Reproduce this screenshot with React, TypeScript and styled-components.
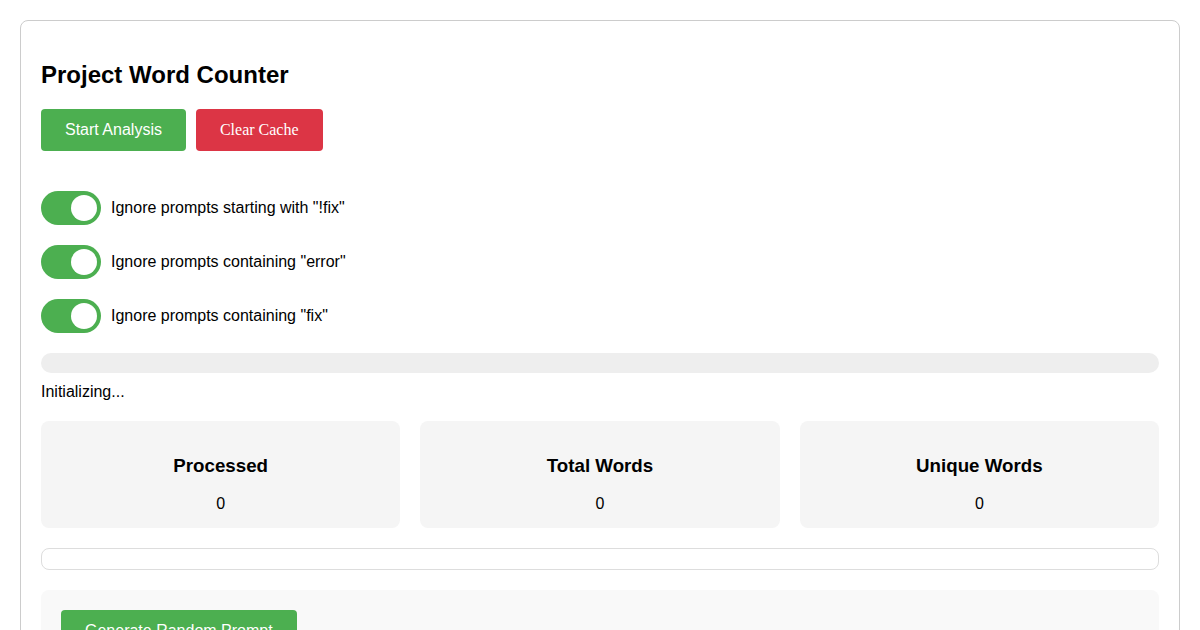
import React, { useState } from "react";
import styled, { createGlobalStyle } from "styled-components";

const GlobalStyle = createGlobalStyle`
  body {
    margin: 0;
    padding: 20px;
    font-family: "Liberation Sans", Arial, sans-serif;
    color: #000;
    background: #fff;
  }
`;

const Container = styled.div`
  border: 1px solid #ccc;
  border-radius: 8px;
  padding: 0 20px 20px;
  min-height: 700px;
`;

const Title = styled.h2`
  font-size: 24px;
  font-weight: bold;
  line-height: 28px;
  margin: 40px 0 20px;
`;

const ButtonRow = styled.div`
  display: flex;
  gap: 10px;
  margin-bottom: 40px;
`;

const Button = styled.button<{ $variant?: "primary" | "danger"; $serif?: boolean }>`
  background: ${(p) => (p.$variant === "danger" ? "#dc3545" : "#4caf50")};
  color: #fff;
  border: none;
  border-radius: 4px;
  padding: 12px 24px;
  font-size: 16px;
  line-height: 18px;
  font-family: ${(p) =>
    p.$serif ? '"Liberation Serif", "Times New Roman", serif' : '"Liberation Sans", Arial, sans-serif'};
  cursor: pointer;
`;

const ToggleList = styled.div`
  display: flex;
  flex-direction: column;
  gap: 20px;
  margin-bottom: 20px;
`;

const ToggleRow = styled.label`
  display: flex;
  align-items: center;
  gap: 10px;
  font-size: 16px;
  cursor: pointer;
`;

const Switch = styled.span<{ $on: boolean }>`
  position: relative;
  width: 60px;
  height: 34px;
  border-radius: 34px;
  background: ${(p) => (p.$on ? "#4caf50" : "#ccc")};
  flex-shrink: 0;

  &::before {
    content: "";
    position: absolute;
    width: 26px;
    height: 26px;
    left: 4px;
    top: 4px;
    border-radius: 50%;
    background: #fff;
    transform: translateX(${(p) => (p.$on ? "26px" : "0")});
    transition: transform 0.2s;
  }
`;

const HiddenInput = styled.input.attrs({ type: "checkbox" })`
  display: none;
`;

const ProgressTrack = styled.div`
  height: 20px;
  border-radius: 10px;
  background: #eee;
  overflow: hidden;
`;

const ProgressFill = styled.div`
  height: 100%;
  background: #4caf50;
`;

const Status = styled.div`
  margin: 10px 0 20px;
  font-size: 16px;
  line-height: 18px;
`;

const StatsGrid = styled.div`
  display: grid;
  grid-template-columns: repeat(3, 1fr);
  gap: 20px;
  margin-bottom: 20px;
`;

const StatCard = styled.div`
  background: #f5f5f5;
  border-radius: 8px;
  padding: 15px;
  text-align: center;
`;

const StatLabel = styled.h3`
  font-size: 18.72px;
  font-weight: bold;
  margin: 18.72px 0;
  line-height: 21.5px;
`;

const StatValue = styled.p`
  margin: 0;
  font-size: 16px;
  line-height: 18px;
`;

const WordList = styled.div`
  border: 1px solid #ddd;
  border-radius: 8px;
  padding: 10px;
  margin-bottom: 20px;
`;

const PromptSection = styled.div`
  background: #f9f9f9;
  border-radius: 8px;
  padding: 20px;
  min-height: 100px;
`;

const toggles = [
  'Ignore prompts starting with "!fix"',
  'Ignore prompts containing "error"',
  'Ignore prompts containing "fix"',
];

const stats = [
  { label: "Processed", value: 0 },
  { label: "Total Words", value: 0 },
  { label: "Unique Words", value: 0 },
];

export default function App() {
  const [checked, setChecked] = useState([true, true, true]);
  const progress = 0;

  return (
    <>
      <GlobalStyle />
      <Container>
        <Title>Project Word Counter</Title>
        <ButtonRow>
          <Button $variant="primary">Start Analysis</Button>
          <Button $variant="danger" $serif>
            Clear Cache
          </Button>
        </ButtonRow>
        <ToggleList>
          {toggles.map((t, i) => (
            <ToggleRow key={t}>
              <HiddenInput
                checked={checked[i]}
                onChange={() => setChecked((c) => c.map((v, j) => (j === i ? !v : v)))}
              />
              <Switch $on={checked[i]} />
              {t}
            </ToggleRow>
          ))}
        </ToggleList>
        <ProgressTrack>
          <ProgressFill style={{ width: `${progress}%` }} />
        </ProgressTrack>
        <Status>Initializing...</Status>
        <StatsGrid>
          {stats.map((s) => (
            <StatCard key={s.label}>
              <StatLabel>{s.label}</StatLabel>
              <StatValue>{s.value}</StatValue>
            </StatCard>
          ))}
        </StatsGrid>
        <WordList />
        <PromptSection>
          <Button $variant="primary">Generate Random Prompt</Button>
        </PromptSection>
      </Container>
    </>
  );
}
